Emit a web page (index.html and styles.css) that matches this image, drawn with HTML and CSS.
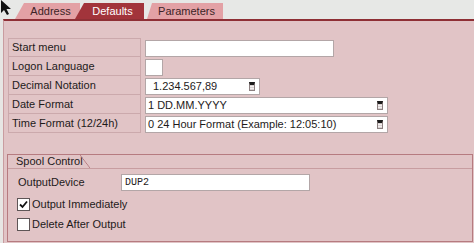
FILE: index.html
```html
<!DOCTYPE html>
<html lang="en">
<head>
  <meta charset="UTF-8" />
  <title>User Defaults</title>
  <link rel="stylesheet" href="styles.css">
</head>
<body>
  <div class="tabbar">
    <div class="tab first">Address</div>
    <div class="tab active">Defaults</div>
    <div class="tab last">Parameters</div>
  </div>

  <div class="panel">
    <div class="fields">
      <div class="row">
        <div class="label top">Start menu</div>
        <div class="input w-start"></div>
      </div>
      <div class="row">
        <div class="label">Logon Language</div>
        <div class="input w-lang"></div>
      </div>
      <div class="row">
        <div class="label">Decimal Notation</div>
        <div class="input w-dec pad">1.234.567,89<span class="f4"></span></div>
      </div>
      <div class="row">
        <div class="label">Date Format</div>
        <div class="input w-wide">1 DD.MM.YYYY<span class="f4"></span></div>
      </div>
      <div class="row">
        <div class="label">Time Format (12/24h)</div>
        <div class="input w-wide">0 24 Hour Format (Example: 12:05:10)<span class="f4"></span></div>
      </div>
    </div>

    <div class="group">
      <div class="group-head">
        <span class="group-title">Spool Control</span>
        <span class="slant"></span>
      </div>
      <div class="out-row">
        <div class="out-label">OutputDevice</div>
        <div class="input w-out mono">DUP2</div>
      </div>
      <div class="checks">
        <div class="check-row">
          <span class="box">
            <svg width="11" height="11" viewBox="0 0 11 11"><path d="M2 5.5 L4.5 8 L9 2.5" fill="none" stroke="#111" stroke-width="1.8"/></svg>
          </span>
          Output Immediately
        </div>
        <div class="check-row">
          <span class="box"></span>
          Delete After Output
        </div>
      </div>
    </div>
  </div>

  <svg class="cursor" width="13" height="16" viewBox="0 0 13 16">
    <path d="M1 0 L1 13 L4 10 L7 15 L9 14 L6.5 9 L11 9 Z" fill="#111"/>
  </svg>
</body>
</html>
```

FILE: styles.css
```css
body { margin: 0; background: #e7e6e4; font-family: "Liberation Sans", Arial, sans-serif; font-size: 11px; color: #1e1a1a; overflow: hidden; height: 243px; }

.tabbar { height: 19px; padding-left: 15px; display: flex; align-items: flex-end; background: #e7e8e6; }
.tab { height: 16px; line-height: 16px; background: #e3a1a5; color: #3b2427; text-align: center; box-sizing: border-box; clip-path: polygon(9px 0, 100% 0, 100% 100%, 0 100%); }
.tab.first { width: 65px; padding-left: 6px; }
.tab.active { width: 69px; margin-left: -5px; padding-left: 6px; background: #a2343b; color: #fff; }
.tab.last { width: 76px; margin-left: 3px; padding-left: 3px; clip-path: polygon(5px 0, 100% 0, 100% 100%, 0 100%); }

.panel { margin-left: 3px; border-top: 2px solid #8e2f35; border-left: 1px solid #c99ca0; background: #e1c4c6; height: 224px; padding-top: 17px; box-sizing: border-box; }

.fields { padding-left: 4px; }
.row { display: flex; gap: 4px; }
.label { width: 133px; height: 19px; box-sizing: border-box; border: 1px solid #cba9ac; border-top: none; padding-left: 3px; line-height: 19px; }
.label.top { border-top: 1px solid #cba9ac; line-height: 17px; }

.input { height: 17px; margin-top: 2px; box-sizing: border-box; background: #fff; border: 1px solid #b3a6a7; padding-left: 2px; line-height: 15px; position: relative; white-space: nowrap; }
.w-start { width: 189px; }
.w-lang { width: 18px; }
.w-dec { width: 115px; }
.w-wide { width: 243px; }
.pad { padding-left: 7px; }
.f4 { position: absolute; right: 4px; top: 3px; width: 6px; height: 9px; box-sizing: border-box; border: 1px solid #8c8080; border-top: 3px solid #1c1c1c; background: repeating-linear-gradient(#d9d3d3 0 1px, #f4f0f0 1px 2px); }

.group { margin: 21px 0 0 3px; width: 466px; height: 88px; box-sizing: border-box; border: 1px solid #b67b80; }
.group-head { display: flex; height: 14px; border-bottom: 1px solid #c79da0; box-sizing: border-box; }
.group-title { width: 72px; padding-left: 8px; box-sizing: border-box; line-height: 13px; white-space: nowrap; }
.slant { width: 10px; background: linear-gradient(to top right, transparent calc(50% - 0.7px), #b67b80 50%, transparent calc(50% + 0.7px)); }

.out-row { display: flex; margin-top: 5px; }
.out-label { width: 113px; padding-left: 10px; box-sizing: border-box; line-height: 17px; }
.w-out { width: 189px; margin-top: 0; padding-left: 3px; }
.mono { font-family: "Liberation Mono", "Courier New", monospace; font-size: 10px; }

.checks { margin-top: 3px; }
.check-row { display: flex; align-items: center; gap: 2px; height: 20px; padding-left: 9px; }
.box { width: 13px; height: 13px; box-sizing: border-box; border: 1px solid #5e5556; background: #fff; display: flex; align-items: center; justify-content: center; }

.cursor { position: absolute; left: 0; top: 0; }
```
